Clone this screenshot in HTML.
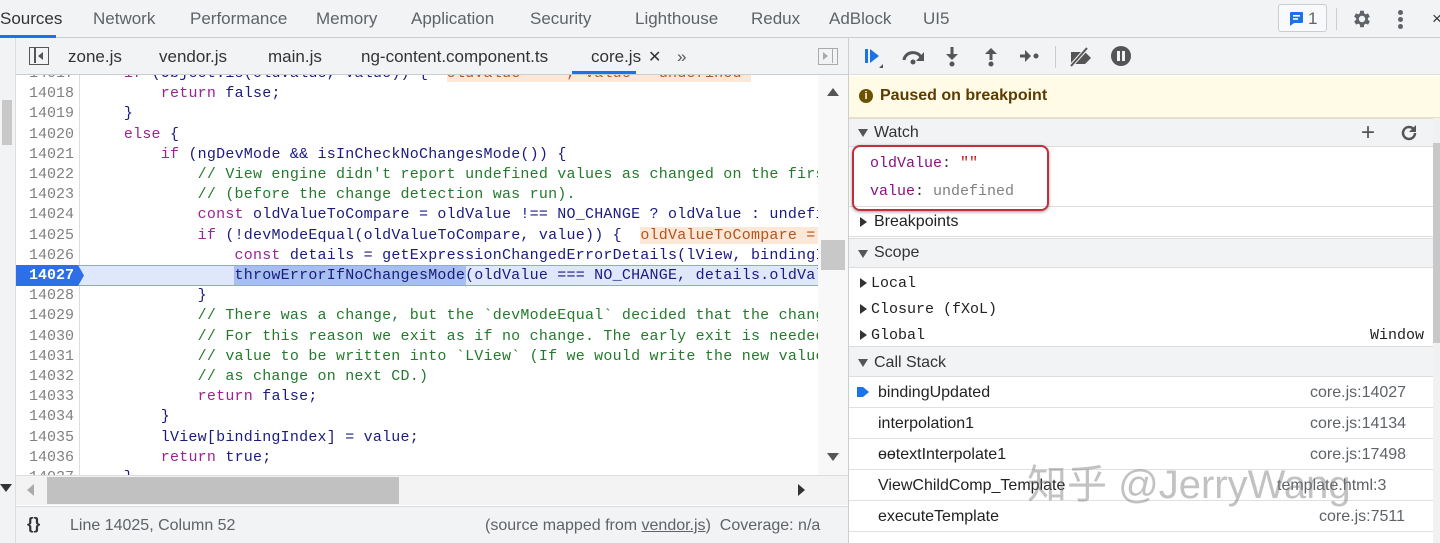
<!DOCTYPE html>
<html><head><meta charset="utf-8"><style>
*{box-sizing:border-box;margin:0;padding:0}
body{width:1440px;height:543px;overflow:hidden;background:#fff;font-family:"Liberation Sans",sans-serif;color:#333;position:relative}
.abs{position:absolute}
.top{left:0;top:0;width:1440px;height:38px;background:#f1f3f4;border-bottom:1px solid #cacdd1}
.top span{position:absolute;top:9px;font-size:17px;color:#5f6368}
.tabs{left:16px;top:38px;width:832px;height:37px;background:#f1f3f4;border-bottom:1px solid #cacdd1}
.tabs span{position:absolute;top:9px;font-size:17px;color:#333}
.code{left:16px;top:75px;width:802px;height:400px;overflow:hidden;background:#fff}
.gut{position:absolute;left:0;top:0;width:64px;height:400px;border-right:1px solid #ddd;background:#fff}
.ln{position:absolute;left:0;width:58px;text-align:right;font:15px "Liberation Mono",monospace;color:#808080}
.cl{position:absolute;left:71px;white-space:pre;font:15px "Liberation Mono",monospace;color:#1a1a80;letter-spacing:0.22px}
.k{color:#9b2393}.c{color:#237a2c}.v{color:#222}
.hl{background:#fde8d7;color:#b3541e}
.rp{left:848px;top:38px;width:592px;height:505px;border-left:1px solid #cacdd1}
.sec{position:absolute;left:0;width:584px;background:#f1f3f4;border-bottom:1px solid #ddd;border-top:1px solid #ddd;font-size:16px;color:#333}
.row{position:absolute;left:0;width:584px;border-bottom:1px solid #e0e0e0;font-size:16px;color:#222}
.mono{font-family:"Liberation Mono",monospace;font-size:15px}
.tri{position:absolute;width:0;height:0;border-left:5px solid transparent;border-right:5px solid transparent;border-top:8px solid #555}
.trr{position:absolute;width:0;height:0;border-top:5px solid transparent;border-bottom:5px solid transparent;border-left:7px solid #333}
</style></head><body>

<div class="abs top">
<span style="left:0;color:#333">Sources</span>
<div class="abs" style="left:0;top:35px;width:56px;height:3px;background:#1a73e8"></div>
<span style="left:93px">Network</span>
<span style="left:190px">Performance</span>
<span style="left:316px">Memory</span>
<span style="left:411px">Application</span>
<span style="left:530px">Security</span>
<span style="left:635px">Lighthouse</span>
<span style="left:751px">Redux</span>
<span style="left:829px">AdBlock</span>
<span style="left:923px">UI5</span>
<div class="abs" style="left:1278px;top:4px;width:49px;height:28px;border:1px solid #cacdd1;border-radius:3px;background:#f8f9fa">
<svg class="abs" style="left:9px;top:6px" width="16" height="16" viewBox="0 0 16 16"><path d="M2 1h12a1 1 0 0 1 1 1v9a1 1 0 0 1-1 1H6l-4 3V2a1 1 0 0 1 1-1z" fill="#1a73e8"/><rect x="5" y="4" width="7" height="1.6" fill="#fff"/><rect x="5" y="7.2" width="5" height="1.6" fill="#fff"/></svg>
<span style="left:29px;top:4px">1</span></div>
<div class="abs" style="left:1336px;top:8px;width:1px;height:22px;background:#cacdd1"></div>
<svg class="abs" style="left:1351px;top:8px" width="22" height="22" viewBox="0 0 24 24"><path fill="#5f6368" d="M19.4 13a7.5 7.5 0 0 0 0-2l2.1-1.6-2-3.5-2.5 1a7 7 0 0 0-1.7-1L15 3h-4l-.4 2.9a7 7 0 0 0-1.7 1l-2.5-1-2 3.5L6.6 11a7.5 7.5 0 0 0 0 2l-2.1 1.6 2 3.5 2.5-1a7 7 0 0 0 1.7 1L11 21h4l.4-2.9a7 7 0 0 0 1.7-1l2.5 1 2-3.5zM13 15.5a3.5 3.5 0 1 1 0-7 3.5 3.5 0 0 1 0 7z" transform="translate(-1 0)"/></svg>
<div class="abs" style="left:1398px;top:10px;width:5px;height:5px;border-radius:50%;background:#5f6368;box-shadow:0 7px 0 #5f6368,0 14px 0 #5f6368"></div>
<span style="left:1432px;color:#333">×</span>
</div>

<div class="abs" style="left:0;top:38px;width:16px;height:505px;background:#f1f3f4;border-right:1px solid #ddd"></div>
<div class="abs" style="left:2px;top:100px;width:10px;height:45px;background:#c8c8c8"></div>

<div class="abs tabs">
<div class="abs" style="left:13px;top:9px;width:20px;height:18px;border:1.5px solid #555"><div class="abs" style="left:4px;top:0;width:1.5px;height:15px;background:#555"></div><div class="abs" style="left:8px;top:3.5px;border-top:4px solid transparent;border-bottom:4px solid transparent;border-right:5px solid #555"></div></div>
<span style="left:52px">zone.js</span>
<span style="left:143px">vendor.js</span>
<span style="left:252px">main.js</span>
<span style="left:345px">ng-content.component.ts</span>
<span style="left:575px">core.js</span>
<span style="left:632px;font-size:16px">✕</span>
<span style="left:661px;color:#555">»</span>
<div class="abs" style="left:556px;top:33px;width:64px;height:3px;background:#1a73e8"></div>
<div class="abs" style="left:802px;top:10px;width:20px;height:17px;border:1.5px solid #aaa"><div class="abs" style="right:4px;top:0;width:1.5px;height:14px;background:#aaa"></div><div class="abs" style="left:4px;top:3px;border-top:4px solid transparent;border-bottom:4px solid transparent;border-left:5px solid #aaa"></div></div>
</div>

<div class="abs code">
<div class="gut"></div>
<div class="abs" style="left:0;top:190px;width:802px;height:21px;background:#dfe8fb;border-top:1px solid #8fa7e0;border-bottom:1px solid #8fa7e0"></div>
<div class="abs" style="left:0;top:190px;width:68px;height:21px;background:#2e6ee6;clip-path:polygon(0 0,62px 0,68px 50%,62px 100%,0 100%)"></div>
<div class="abs" style="left:218px;top:191px;width:232px;height:19px;background:#a6bfee"></div>
<div id="lines"></div>
</div>
<script>
var L=[
[14017,'    <span class="k">if</span> (Object.is(oldValue, value)) {  <span class="hl">oldValue = "", value = undefined </span>'],
[14018,'        <span class="k">return</span> false;'],
[14019,'    }'],
[14020,'    <span class="k">else</span> {'],
[14021,'        <span class="k">if</span> (ngDevMode &amp;&amp; isInCheckNoChangesMode()) {'],
[14022,'<span class="c">            // View engine didn\'t report undefined values as changed on the first checkNoChanges</span>'],
[14023,'<span class="c">            // (before the change detection was run).</span>'],
[14024,'            <span class="k">const</span> oldValueToCompare = oldValue !== NO_CHANGE ? oldValue : undefined;'],
[14025,'            <span class="k">if</span> (!devModeEqual(oldValueToCompare, value)) {  <span class="hl">oldValueToCompare = undefined</span>'],
[14026,'                <span class="k">const</span> details = getExpressionChangedErrorDetails(lView, bindingIndex'],
[14027,'                throwErrorIfNoChangesMode(oldValue === NO_CHANGE, details.oldValue'],
[14028,'            }'],
[14029,'<span class="c">            // There was a change, but the `devModeEqual` decided that the change is exempt</span>'],
[14030,'<span class="c">            // For this reason we exit as if no change. The early exit is needed</span>'],
[14031,'<span class="c">            // value to be written into `LView` (If we would write the new value</span>'],
[14032,'<span class="c">            // as change on next CD.)</span>'],
[14033,'            <span class="k">return</span> false;'],
[14034,'        }'],
[14035,'        lView[bindingIndex] = value;'],
[14036,'        <span class="k">return</span> true;'],
[14037,'    }']];
var h='';L.forEach(function(l,i){var t=-10+i*20.2;var sel=l[0]==14027;
h+='<div class="ln" style="top:'+t+'px;'+(sel?'color:#fff;font-weight:bold':'')+'">'+l[0]+'</div><div class="cl" style="top:'+t+'px">'+l[1]+'</div>';});
document.getElementById('lines').innerHTML=h;
</script>

<div class="abs" style="left:818px;top:75px;width:30px;height:400px;background:#f8f8f8">
<div class="abs" style="left:9px;top:13px;border-left:6px solid transparent;border-right:6px solid transparent;border-bottom:8px solid #555"></div>
<div class="abs" style="left:3px;top:165px;width:24px;height:30px;background:#c8c8c8"></div>
<div class="abs" style="left:9px;top:378px;border-left:6px solid transparent;border-right:6px solid transparent;border-top:8px solid #555"></div>
</div>

<div class="abs" style="left:16px;top:475px;width:832px;height:30px;background:#f3f3f3;border-top:1px solid #ddd">
<div class="abs" style="left:11px;top:8px;border-top:6px solid transparent;border-bottom:6px solid transparent;border-right:7px solid #aaa"></div>
<div class="abs" style="left:31px;top:1px;width:352px;height:27px;background:#c1c1c1"></div>
<div class="abs" style="left:782px;top:8px;border-top:6px solid transparent;border-bottom:6px solid transparent;border-left:7px solid #333"></div>
</div>
<div class="abs" style="left:0;top:484px;border-left:6px solid transparent;border-right:6px solid transparent;border-top:8px solid #333"></div>

<div class="abs" style="left:16px;top:506px;width:832px;height:37px;background:#f1f3f4;border-top:1px solid #ddd;font-size:16px;color:#5f6368">
<span class="abs" style="left:11px;top:7px;font-weight:bold;color:#333;font-size:17px">{}</span>
<span class="abs" style="left:54px;top:10px">Line 14025, Column 52</span>
<span class="abs" style="left:469px;top:10px">(source mapped from <u>vendor.js</u>)&nbsp; Coverage: n/a</span>
</div>

<div class="abs rp">
<div class="abs" style="left:0;top:0;width:592px;height:37px;background:#f1f3f4;border-bottom:1px solid #ddd">
<svg class="abs" style="left:14px;top:9px" width="22" height="22" viewBox="0 0 22 22"><rect x="2" y="2" width="3" height="14" fill="#1a73e8"/><path d="M7 2l9 7-9 7z" fill="#1a73e8"/><path d="M20 17v4h-4z" fill="#555"/></svg>
<svg class="abs" style="left:52px;top:9px" width="26" height="20" viewBox="0 0 26 20"><path d="M3 13a9 8 0 0 1 17-3" stroke="#555" stroke-width="3" fill="none"/><path d="M23 5v9h-8z" fill="#555"/><circle cx="12" cy="15" r="2.5" fill="#555"/></svg>
<svg class="abs" style="left:96px;top:8px" width="14" height="22" viewBox="0 0 14 22"><rect x="5.5" y="1" width="3" height="8" fill="#555"/><path d="M1 8h12l-6 6z" fill="#555"/><circle cx="7" cy="18" r="2.5" fill="#555"/></svg>
<svg class="abs" style="left:135px;top:8px" width="14" height="22" viewBox="0 0 14 22"><path d="M1 8h12l-6-6z" fill="#555"/><rect x="5.5" y="7" width="3" height="7" fill="#555"/><circle cx="7" cy="18" r="2.5" fill="#555"/></svg>
<svg class="abs" style="left:170px;top:10px" width="22" height="16" viewBox="0 0 22 16"><rect x="1" y="6.5" width="6" height="3" fill="#555"/><path d="M6 2l6 6-6 6z" fill="#555"/><circle cx="17" cy="8" r="2.5" fill="#555"/></svg>
<div class="abs" style="left:206px;top:8px;width:1px;height:22px;background:#ccc"></div>
<svg class="abs" style="left:218px;top:8px" width="26" height="22" viewBox="0 0 26 22"><path d="M4 6h14l6 6-6 6H4z" fill="#555"/><path d="M3 21L21 1" stroke="#f1f3f4" stroke-width="4"/><path d="M4 20L20 2" stroke="#555" stroke-width="2"/></svg>
<svg class="abs" style="left:261px;top:7px" width="22" height="22" viewBox="0 0 22 22"><circle cx="11" cy="11" r="10" fill="#555"/><rect x="7" y="6" width="3" height="10" fill="#f1f3f4"/><rect x="12" y="6" width="3" height="10" fill="#f1f3f4"/></svg>
</div>
<div class="abs" style="left:0;top:38px;width:592px;height:42px;background:#fffbe6;border-bottom:1px solid #e8e2c2;font-weight:bold;font-size:16px;color:#5c3b00">
<div class="abs" style="left:10px;top:13px;width:14px;height:14px;border-radius:50%;background:#6b5200;color:#fffbe6;font-size:11px;text-align:center;line-height:14px">i</div>
<span class="abs" style="left:31px;top:11px">Paused on breakpoint</span></div>
<div class="abs" style="left:584px;top:80px;width:8px;height:425px;background:#f1f1f1"><div style="margin-top:25px;height:200px;background:#c8c8c8"></div></div>
<div class="sec" style="top:80px;height:29px"><i class="tri" style="left:9px;top:10px"></i><span class="abs" style="left:25px;top:5px">Watch</span>
<span class="abs" style="left:512px;top:0;font-size:24px;color:#555">+</span>
<svg class="abs" style="left:551px;top:5px" width="18" height="18" viewBox="0 0 18 18"><path d="M15 9a6 6 0 1 1-2-4.5" stroke="#555" stroke-width="2.5" fill="none"/><path d="M16 1v7h-7z" fill="#555"/></svg></div>
<div class="abs" style="left:0;top:109px;width:584px;height:60px;border-bottom:1px solid #ddd"></div>
<div class="abs" style="left:3px;top:107px;width:197px;height:66px;border:2px solid #c0303a;border-radius:8px;box-shadow:0 1px 3px rgba(0,0,0,.4)"></div>
<div class="abs mono" style="left:21px;top:117px;color:#881280">oldValue<span style="color:#333">:</span> <span style="color:#c41a16">""</span></div>
<div class="abs mono" style="left:21px;top:145px;color:#881280">value<span style="color:#333">:</span> <span style="color:#808080">undefined</span></div>
<div class="row" style="top:169px;height:30px;border-bottom:1px solid #ddd"><i class="trr" style="left:11px;top:10px"></i><span class="abs" style="left:25px;top:6px">Breakpoints</span></div>
<div class="sec" style="top:200px;height:30px"><i class="tri" style="left:9px;top:11px"></i><span class="abs" style="left:25px;top:5px">Scope</span></div>
<div class="row mono" style="top:235px;height:22px;border:none"><i class="trr" style="left:11px;top:5px"></i><span class="abs" style="left:22px;top:2px">Local</span></div>
<div class="row mono" style="top:261px;height:22px;border:none"><i class="trr" style="left:11px;top:5px"></i><span class="abs" style="left:22px;top:2px">Closure (fXoL)</span></div>
<div class="row mono" style="top:287px;height:20px;border:none"><i class="trr" style="left:11px;top:5px"></i><span class="abs" style="left:22px;top:2px">Global</span><span class="abs" style="left:521px;top:2px">Window</span></div>
<div class="sec" style="top:308px;height:31px"><i class="tri" style="left:9px;top:12px"></i><span class="abs" style="left:25px;top:7px">Call Stack</span></div>
<div class="row" style="top:339px;height:31px"><svg class="abs" style="left:8px;top:8px" width="12" height="14" viewBox="0 0 12 14"><path d="M0 2h6l6 5-6 5H0z" fill="#1a73e8"/></svg><span class="abs" style="left:29px;top:7px">bindingUpdated</span><span class="abs" style="left:461px;top:7px;color:#5f6368">core.js:14027</span></div>
<div class="row" style="top:370px;height:31px"><span class="abs" style="left:29px;top:7px">interpolation1</span><span class="abs" style="left:461px;top:7px;color:#5f6368">core.js:14134</span></div>
<div class="row" style="top:401px;height:31px"><span class="abs" style="left:29px;top:7px">ɵɵtextInterpolate1</span><span class="abs" style="left:461px;top:7px;color:#5f6368">core.js:17498</span></div>
<div class="row" style="top:432px;height:31px"><span class="abs" style="left:29px;top:7px">ViewChildComp_Template</span><span class="abs" style="left:428px;top:7px;color:#5f6368">template.html:3</span></div>
<div class="row" style="top:463px;height:31px"><span class="abs" style="left:29px;top:7px">executeTemplate</span><span class="abs" style="left:470px;top:7px;color:#5f6368">core.js:7511</span></div>
<div class="abs" style="left:178px;top:414px;font-size:40px;color:rgba(120,120,120,.45);font-family:'Liberation Sans','Noto Sans CJK SC',sans-serif;white-space:nowrap">知乎 @JerryWang</div>
</div>
</body></html>
